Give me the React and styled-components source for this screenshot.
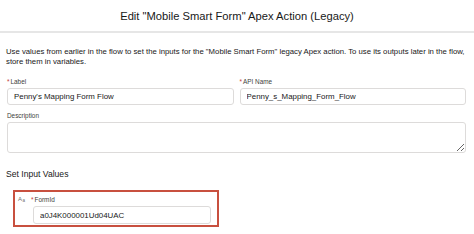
import React from "react"
import styled, { createGlobalStyle } from "styled-components"

const GlobalStyle = createGlobalStyle`
  html, body {
    margin: 0;
    padding: 0;
    background: #ffffff;
  }
  body {
    font-family: "Liberation Sans", Arial, sans-serif;
    color: #181818;
  }
`

const Modal = styled.div`
  width: 474px;
  height: 234px;
  overflow: hidden;
  background: #fff;
`

const Header = styled.header`
  height: 31px;
  display: flex;
  align-items: center;
  justify-content: center;
  border-bottom: 2px solid #e6e6e6;
`

const Title = styled.h2`
  margin: 0;
  font-size: 11.2px;
  font-weight: 400;
  color: #181818;
  padding-top: 1px;
`

const Body = styled.div`
  padding: 14px 8px 0 6px;
  display: flex;
  flex-direction: column;
`

const Intro = styled.p`
  margin: 0;
  font-size: 7.75px;
  line-height: 10px;
  color: #181818;
`

const Row = styled.div`
  display: flex;
  gap: 6px;
  margin-top: ${(p) => p.$top || 0}px;
  padding-left: 1px;
`

const Field = styled.div`
  flex: 1;
  display: flex;
  flex-direction: column;
`

const Label = styled.label`
  font-size: 6.4px;
  line-height: 9px;
  color: #3e3e3c;
  margin-bottom: 2px;

  abbr {
    color: #c23934;
    text-decoration: none;
    margin-right: 1px;
  }
`

const TextInput = styled.input`
  box-sizing: border-box;
  width: 100%;
  height: 17px;
  margin: 0;
  padding: 0 6px;
  border: 1px solid #dddbda;
  border-radius: 3px;
  font-family: "Liberation Sans", Arial, sans-serif;
  font-size: 7.9px;
  color: #181818;
  background: #fff;
  outline: none;
`

const TextArea = styled.textarea`
  box-sizing: border-box;
  display: block;
  width: 100%;
  height: 31px;
  margin: 0;
  padding: 4px 6px;
  border: 1px solid #dddbda;
  border-radius: 3px;
  resize: vertical;
  outline: none;
  font-family: "Liberation Sans", Arial, sans-serif;
`

const SectionTitle = styled.h3`
  margin: 15px 0 0;
  font-size: 8.6px;
  line-height: 12px;
  font-weight: 400;
  color: #181818;
`

const ParamBox = styled.div`
  box-sizing: border-box;
  margin: 10px 0 0 7px;
  width: 206px;
  height: 37px;
  border: 2px solid #c8503f;
  display: flex;
  padding: 3px 6px 0 2px;
`

const TypeIcon = styled.span`
  width: 13px;
  flex: none;
  font-size: 6px;
  line-height: 8px;
  color: #706e6b;
  padding-left: 1px;

  sub {
    font-size: 4.5px;
    vertical-align: -1px;
    margin-left: 0.5px;
  }
`

const ParamField = styled.div`
  flex: 1;
  display: flex;
  flex-direction: column;

  ${Label} {
    margin-bottom: 2px;
  }

  ${TextInput} {
    height: 18px;
    margin-left: 2px;
    width: calc(100% - 2px);
  }
`

const App = () => (
  <Modal>
    <GlobalStyle />
    <Header>
      <Title>Edit "Mobile Smart Form" Apex Action (Legacy)</Title>
    </Header>
    <Body>
      <Intro>
        Use values from earlier in the flow to set the inputs for the "Mobile Smart Form" legacy Apex
        action. To use its outputs later in the flow, store them in variables.
      </Intro>
      <Row $top={10}>
        <Field>
          <Label>
            <abbr>*</abbr>Label
          </Label>
          <TextInput readOnly defaultValue="Penny's Mapping Form Flow" />
        </Field>
        <Field>
          <Label>
            <abbr>*</abbr>API Name
          </Label>
          <TextInput readOnly defaultValue="Penny_s_Mapping_Form_Flow" />
        </Field>
      </Row>
      <Row $top={6}>
        <Field>
          <Label>Description</Label>
          <TextArea readOnly />
        </Field>
      </Row>
      <SectionTitle>Set Input Values</SectionTitle>
      <ParamBox>
        <TypeIcon>
          A<sub>a</sub>
        </TypeIcon>
        <ParamField>
          <Label>
            <abbr>*</abbr>FormId
          </Label>
          <TextInput readOnly defaultValue="a0J4K000001Ud04UAC" />
        </ParamField>
      </ParamBox>
    </Body>
  </Modal>
)

export default App
